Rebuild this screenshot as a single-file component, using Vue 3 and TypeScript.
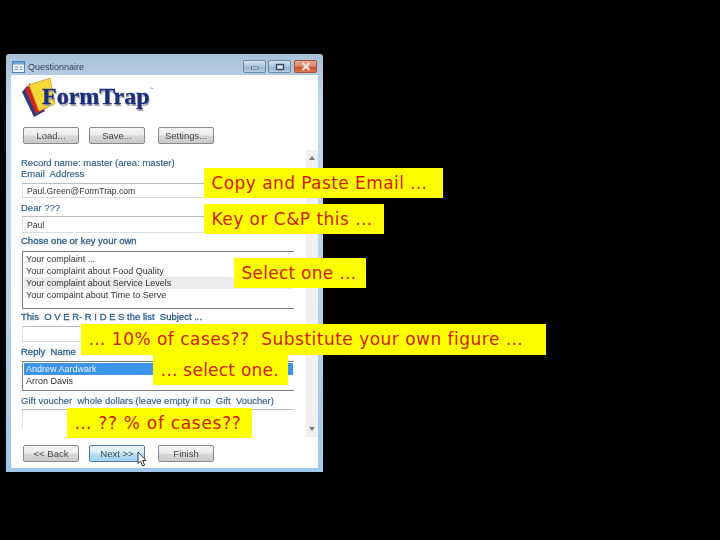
<script setup lang="ts">
const callouts = [
  { id: 'a', text: 'Copy and Paste Email …', x: 204, y: 168, w: 239, h: 30, ls: 0.42 },
  { id: 'b', text: 'Key or C&P this …', x: 204, y: 204, w: 180, h: 30, ls: 0.47 },
  { id: 'c', text: 'Select one …', x: 234, y: 258, w: 132, h: 30, ls: 0.25 },
  { id: 'd', text: '… 10% of cases??  Substitute your own figure …', x: 81, y: 324, w: 465, h: 31, ls: 0.48 },
  { id: 'e', text: '… select one.', x: 153, y: 355, w: 135, h: 30, ls: 0.23 },
  { id: 'f', text: '… ?? % of cases??', x: 67, y: 408, w: 185, h: 30, ls: 0.7 },
]
const complaints = [
  'Your complaint ...',
  'Your complaint about Food Quality',
  'Your complaint about Service Levels',
  'Your compaint about Time to Serve',
]
</script>

<template>
  <div class="slide">
    <div class="window">
      <div class="titlebar">
        <svg class="appicon" width="13" height="12" viewBox="0 0 13 12">
          <rect x="0.5" y="0.5" width="12" height="11" fill="#eaf3fb" stroke="#4f86b8" />
          <rect x="1" y="1" width="11" height="2.5" fill="#6fa6d6" />
          <path d="M3 6h3M3 8.5h3M8 6h2M8 8.5h2" stroke="#7a93aa" />
        </svg>
        <span class="title">Questionnaire</span>
        <div class="controls">
          <div class="ctl"><svg width="10" height="6" viewBox="0 0 10 6"><rect x="1.5" y="3" width="7" height="2" fill="#f4f8fb" stroke="#3d5266" stroke-width="0.7" /></svg></div>
          <div class="ctl"><svg width="10" height="8" viewBox="0 0 10 8"><rect x="1.5" y="1.5" width="7" height="5" fill="#cfe0ee" stroke="#32475c" stroke-width="1.4" /></svg></div>
          <div class="ctl close"><svg width="12" height="9" viewBox="0 0 12 9"><path d="M2.5 1 L9.5 8 M9.5 1 L2.5 8" stroke="#f3e4dc" stroke-width="2.2" /></svg></div>
        </div>
      </div>

      <div class="client">
        <div class="logo">
          <svg class="pages" width="35" height="40" viewBox="0 0 35 40">
            <path d="M1 15 L6 9 L24 34 L13 40 Z" fill="#2a3a80" />
            <path d="M4 13 L9 6 L26 31 L15 37 Z" fill="#c8281e" />
            <path d="M8 8 L29 1 L34 27 L18 34 Z" fill="#f7d83a" stroke="#d8962a" stroke-width="0.8" />
          </svg>
          <span class="brand">FormTrap<sup>™</sup></span>
        </div>

        <div class="btnrow top">
          <div class="btn">Load...</div>
          <div class="btn">Save...</div>
          <div class="btn third">Settings...</div>
        </div>

        <div class="scrollarea">
          <div class="form">
            <div class="lbl">Record name: master (area: master)</div>
            <div class="lbl">Email&#160; Address</div>
            <div class="input one">Paul.Green@FormTrap.com</div>
            <div class="lbl">Dear ???</div>
            <div class="input two">Paul</div>
            <div class="lbl bold">Chose one or key your own</div>
            <div class="list tall">
              <div
                v-for="(c, i) in complaints"
                :key="c"
                class="item"
                :class="{ hover: i === 2 }"
              >{{ c }}</div>
            </div>
            <div class="lbl bold">This&#160; O V E R- R I D E S the list&#160; Subject ...</div>
            <div class="input three"></div>
            <div class="lbl bold">Reply&#160; Name</div>
            <div class="list short">
              <div class="item sel">Andrew Aardwark</div>
              <div class="item">Arron Davis</div>
            </div>
            <div class="lbl">Gift voucher&#160; whole dollars (leave empty if no&#160; Gift&#160; Voucher)</div>
            <div class="input four"></div>
          </div>
          <div class="scrollbar">
            <svg width="6" height="4" viewBox="0 0 6 4"><path d="M0 4 L3 0 L6 4 Z" fill="#777" /></svg>
            <svg width="6" height="4" viewBox="0 0 6 4"><path d="M0 0 L6 0 L3 4 Z" fill="#777" /></svg>
          </div>
        </div>

        <div class="btnrow bottom">
          <div class="btn">&lt;&lt; Back</div>
          <div class="btn next">Next &gt;&gt;</div>
          <div class="btn third">Finish</div>
        </div>
      </div>
    </div>

    <svg class="cursor" width="11" height="16" viewBox="0 0 11 16">
      <path d="M1 1 L1 12.5 L3.6 10.2 L5.6 15 L7.6 14.1 L5.6 9.6 L9 9.4 Z" fill="#fff" stroke="#222" stroke-width="0.9" />
    </svg>

    <div
      v-for="c in callouts"
      :key="c.id"
      class="callout"
      :style="{ left: c.x + 'px', top: c.y + 'px', width: c.w + 'px', height: c.h + 'px', letterSpacing: c.ls + 'px' }"
    >{{ c.text }}</div>
  </div>
</template>

<style>
html, body { margin: 0; background: #000; }
</style>

<style scoped>
.slide {
  position: relative;
  width: 720px;
  height: 540px;
  box-sizing: border-box;
  padding: 54px 0 0 6px;
  background: #000;
  overflow: hidden;
  font-family: "Liberation Sans", Arial, sans-serif;
}
.window {
  width: 317px;
  height: 418px;
  box-sizing: border-box;
  padding: 0 5px 4px;
  display: flex;
  flex-direction: column;
  background: linear-gradient(180deg, #a8c2dc 0%, #c4d8ea 12%, #b5d2ea 60%, #9fc8ea 100%);
  border-radius: 3px 3px 0 0;
  filter: blur(0.5px);
}
.titlebar {
  height: 21px;
  display: flex;
  align-items: center;
  flex: none;
  padding: 4px 0 0 1px;
  box-sizing: border-box;
}
.appicon { flex: none; }
.title {
  margin-left: 3px;
  font-size: 9px;
  color: #3a4652;
}
.controls {
  margin-left: auto;
  margin-right: 1px;
  display: flex;
  align-self: flex-start;
  margin-top: 2px;
  gap: 2px;
}
.ctl {
  width: 21px;
  height: 11px;
  border: 1px solid #6f8aa5;
  border-radius: 2px;
  display: flex;
  align-items: center;
  justify-content: center;
  background: linear-gradient(180deg, #d3e2f0 0%, #aac6df 50%, #93b4d2 55%, #b6cfe4 100%);
}
.ctl.close {
  margin-left: 1px;
  border-color: #a8533a;
  background: linear-gradient(180deg, #e7a892 0%, #d8816a 50%, #c9502a 55%, #d97a52 100%);
}
.client {
  flex: 1;
  display: flex;
  flex-direction: column;
  background: #fff;
  min-height: 0;
}
.logo {
  height: 45px;
  flex: none;
  margin-top: 2px;
  padding-left: 10px;
  display: flex;
  align-items: flex-start;
}
.pages { flex: none; }
.brand {
  margin-left: -14px;
  margin-top: 5px;
  font-family: "Liberation Serif", serif;
  font-weight: 700;
  font-size: 24px;
  line-height: 28px;
  color: #1b2f7c;
  text-shadow: 1px 2px 1px #a0a0a0;
  -webkit-text-stroke: 0.3px #1b2f7c;
}
.brand sup {
  font-size: 4px;
  font-weight: 400;
  vertical-align: 14px;
  line-height: 0;
  color: #666;
  text-shadow: none;
  -webkit-text-stroke: 0;
}
.btnrow {
  display: flex;
  flex: none;
  padding-left: 12px;
  gap: 10px;
}
.btnrow.top { margin-top: 5px; }
.btnrow.bottom { margin-top: 8px; }
.btn {
  width: 56px;
  height: 17px;
  box-sizing: border-box;
  border: 1px solid #8a8a8a;
  border-radius: 2px;
  display: flex;
  align-items: center;
  justify-content: center;
  font-size: 9.5px;
  color: #4a4a4a;
  background: linear-gradient(180deg, #f4f4f4 0%, #ebebeb 48%, #d8d8d8 52%, #c9c9c9 100%);
}
.btn.third { margin-left: 3px; }
.btn.next {
  border-color: #4d7fa0;
  background: linear-gradient(180deg, #eaf6fd 0%, #d4ecfa 48%, #b6def5 52%, #a0d3f0 100%);
}
.scrollarea {
  margin-top: 6px;
  height: 287px;
  flex: none;
  display: flex;
}
.form {
  flex: 1;
  min-width: 0;
  padding: 7px 0 0 10px;
  display: flex;
  flex-direction: column;
  align-items: flex-start;
}
.lbl {
  font-size: 9.5px;
  line-height: 11px;
  height: 11px;
  color: #2e5f8e;
  white-space: pre;
  -webkit-text-stroke: 0.15px #2e5f8e;
}
.lbl.bold { -webkit-text-stroke: 0.3px #2e5f8e; }
.input {
  box-sizing: border-box;
  width: 284px;
  margin-left: 1px;
  padding: 1px 0 0 4px;
  border: 1px solid #dcdcdc;
  border-top-color: #bdbdbd;
  border-right: 0;
  font-size: 8.6px;
  line-height: 13px;
  color: #333;
  background: #fff;
}
.input.one { height: 15px; margin-top: 4px; margin-bottom: 4px; }
.input.two { height: 17px; margin-top: 3px; margin-bottom: 2px; padding-top: 2px; }
.input.three { height: 16px; margin-top: 4px; margin-bottom: 4px; }
.input.four { width: 272px; height: 19px; margin-top: 3px; border-bottom: 0; }
.list {
  box-sizing: border-box;
  width: 272px;
  margin-left: 1px;
  border: 1px solid #7c7c7c;
  border-right: 0;
  background: #fff;
  padding: 1px 1px 0;
}
.list.tall { height: 58px; margin-top: 5px; margin-bottom: 2px; }
.list.short { height: 30px; margin-top: 4px; margin-bottom: 4px; }
.item {
  height: 12px;
  line-height: 12px;
  font-size: 9px;
  color: #333;
  padding-left: 2px;
  white-space: nowrap;
}
.item.hover { background: #ececec; }
.item.sel { background: #3d95e8; color: #e8f2fb; }
.scrollbar {
  width: 12px;
  flex: none;
  background: #f0f0f0;
  display: flex;
  flex-direction: column;
  align-items: center;
  justify-content: space-between;
  padding: 6px 0;
  box-sizing: border-box;
}
.cursor {
  position: absolute;
  left: 137px;
  top: 451px;
}
.callout {
  position: absolute;
  box-sizing: border-box;
  padding-left: 7.5px;
  background: #ffff00;
  color: #d41a00;
  font-family: "DejaVu Sans", sans-serif;
  font-size: 17px;
  line-height: 30px;
  white-space: pre;
}
</style>
